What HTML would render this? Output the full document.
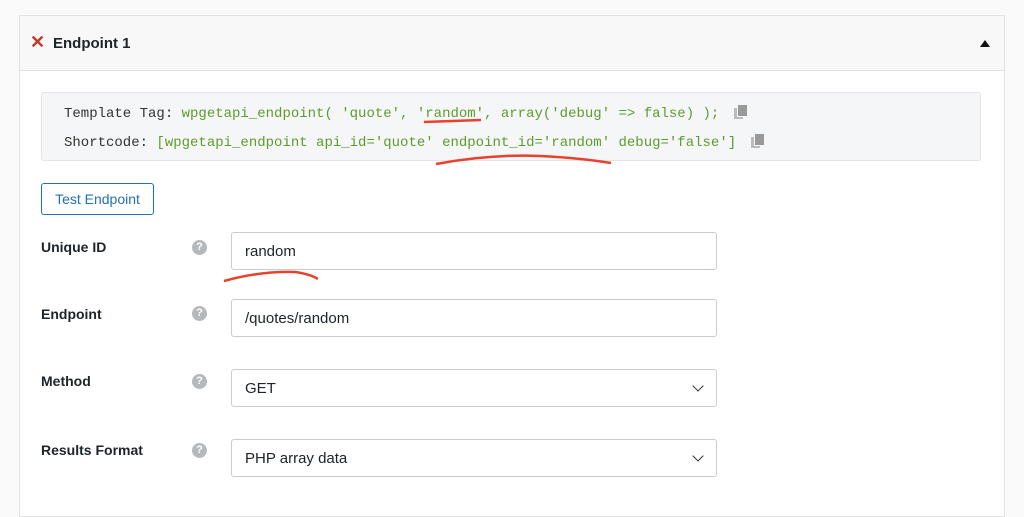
<!DOCTYPE html>
<html><head><style>
body{margin:0;width:1024px;height:489px;background:#fafafa;font-family:"Liberation Sans",sans-serif;position:relative;overflow:hidden;color:#1d2327}
.panel{position:absolute;left:19px;top:15px;width:984px;height:500px;border:1px solid #e2e2e2;background:#fff}
.hdr{height:54px;background:#f8f8f8;border-bottom:1px solid #e2e2e2;position:relative}
.hdr .x{position:absolute;left:10px;top:16px;color:#c0392b;font-size:18px;font-weight:bold}
.hdr .t{position:absolute;left:33px;top:19px;font-size:15px;font-weight:bold}
.hdr .tri{position:absolute;right:14px;top:24px;width:0;height:0;border-left:5px solid transparent;border-right:5px solid transparent;border-bottom:7px solid #111}
.code{position:absolute;left:41px;top:92px;width:938px;height:67px;background:#f5f6f7;border:1px solid #e2e4e7;border-radius:3px;font-family:"Liberation Mono",monospace;font-size:14px;color:#333}
.code div{position:absolute;left:22px;white-space:pre}
.g{color:#5f9b2c}
.cp{display:inline-block;position:relative;width:12px;height:14px;margin-left:15px;vertical-align:-2px}
.cp:before{content:"";position:absolute;left:0;top:3px;width:9px;height:11px;background:#bbb}
.cp:after{content:"";position:absolute;left:3px;top:0;width:9px;height:11px;background:#999;border-left:1px solid #f5f6f7;border-bottom:1px solid #f5f6f7}
.btn{position:absolute;left:41px;top:183px;width:111px;height:30px;border:1px solid #2271b1;border-radius:3px;color:#2271b1;font-size:14px;line-height:30px;text-align:center;background:#fff}
.lbl{position:absolute;left:41px;font-size:14px;font-weight:bold;color:#1d2327}
.q{position:absolute;left:192px;width:15px;height:15px;border-radius:50%;background:#b4b9be;color:#fff;font-size:11px;font-weight:bold;text-align:center;line-height:15px}
.in{position:absolute;left:231px;border:1px solid #c8ccd8;border-radius:3px;background:#fff;font-size:15px;line-height:38px;padding-left:13px;box-sizing:border-box;width:486px;height:38px}
.chev{position:absolute;right:14px;top:12px;width:7px;height:7px;border-right:1.5px solid #333;border-bottom:1.5px solid #333;transform:rotate(45deg)}
</style></head><body>
<div class="panel">
 <div class="hdr"><span class="x">✕</span><span class="t">Endpoint 1</span><span class="tri"></span></div>
</div>
<div class="code">
 <div style="top:12px">Template Tag: <span class="g">wpgetapi_endpoint( 'quote', 'random', array('debug' =&gt; false) );</span><span class="cp"></span></div>
 <div style="top:41px">Shortcode: <span class="g">[wpgetapi_endpoint api_id='quote' endpoint_id='random' debug='false']</span><span class="cp"></span></div>
</div>
<div class="btn">Test Endpoint</div>

<div class="lbl" style="top:239px">Unique ID</div><div class="q" style="top:240px">?</div>
<div class="in" style="top:232px">random</div>
<div class="lbl" style="top:306px">Endpoint</div><div class="q" style="top:306px">?</div>
<div class="in" style="top:299px">/quotes/random</div>
<div class="lbl" style="top:373px">Method</div><div class="q" style="top:374px">?</div>
<div class="in" style="top:369px">GET<span class="chev"></span></div>
<div class="lbl" style="top:442px">Results Format</div><div class="q" style="top:443px">?</div>
<div class="in" style="top:439px">PHP array data<span class="chev"></span></div>

<svg style="position:absolute;left:0;top:0" width="1024" height="489">
 <path d="M424 122 Q450 121 481 120" stroke="#e8412c" stroke-width="2.5" fill="none"/>
 <path d="M436 164 Q490 154 540 156 Q580 158 611 163" stroke="#e8412c" stroke-width="2.5" fill="none"/>
 <path d="M224 281 Q260 271 295 272 Q310 274 318 279" stroke="#e8412c" stroke-width="2.5" fill="none"/>
</svg>
</body></html>
